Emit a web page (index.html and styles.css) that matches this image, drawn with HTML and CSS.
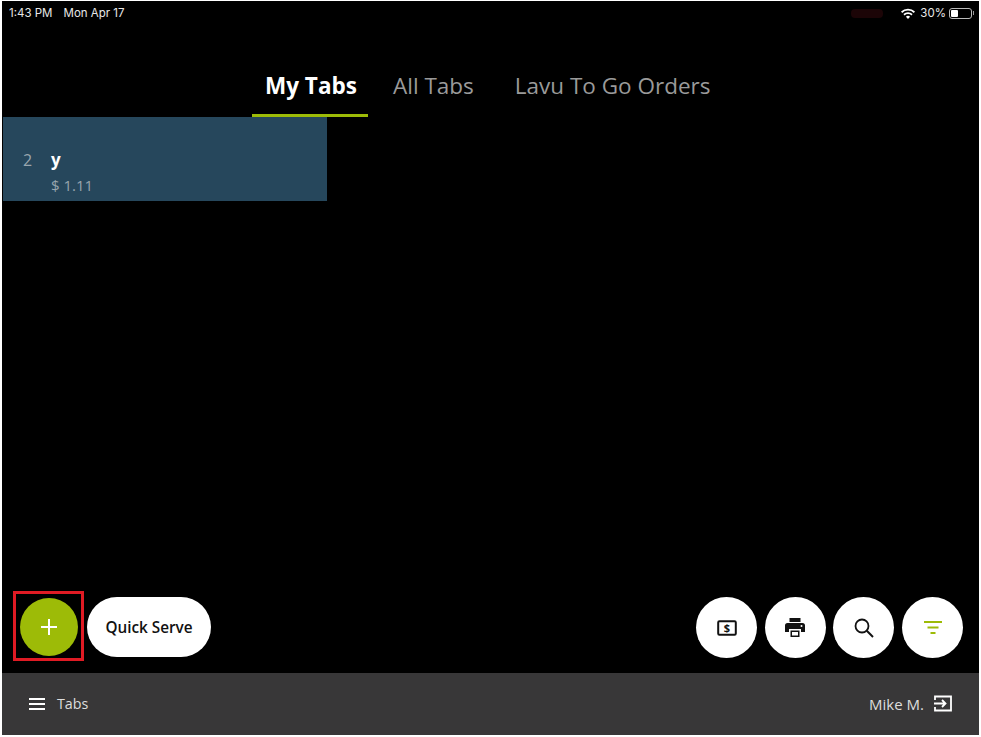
FILE: index.html
```html
<!DOCTYPE html>
<html lang="en">
<head>
<meta charset="utf-8">
<title>Tabs</title>
<link rel="stylesheet" href="styles.css">
</head>
<body>
<div class="screen">
  <header class="status">
    <div class="status-left"><span>1:43 PM</span><span>Mon Apr 17</span></div>
    <div class="status-right">
      <div class="recording"></div>
      <svg class="wifi" width="14" height="11" viewBox="0 0 14 11"><path d="M7 11 4.900 8.700a3 3 0 0 1 4.200 0L7 11ZM3.600 7.400 2.400 6.100a6.600 6.600 0 0 1 9.200 0l-1.200 1.300a4.800 4.800 0 0 0-6.800 0ZM1.200 4.900 0 3.600a10 10 0 0 1 14 0l-1.200 1.300a8.300 8.300 0 0 0-11.600 0Z" fill="#fff"/></svg>
      <span class="percent">30%</span>
      <div class="battery"><div class="battery-level"></div></div>
      <div class="battery-tip"></div>
    </div>
  </header>
  <nav class="tabs">
    <a class="tab tab-active">My Tabs</a>
    <a class="tab">All Tabs</a>
    <a class="tab">Lavu To Go Orders</a>
  </nav>
  <main class="list">
    <article class="card">
      <div class="card-num">2</div>
      <div class="card-body">
        <div class="card-title">y</div>
        <div class="card-price">$ 1.11</div>
      </div>
    </article>
  </main>
  <section class="actions">
    <div class="actions-left">
      <div class="highlight">
        <button class="add" aria-label="Add">
          <svg width="18" height="18" viewBox="0 0 18 18"><path d="M9 1v16M1 9h16" stroke="#fff" stroke-width="2" fill="none"/></svg>
        </button>
      </div>
      <button class="pill">Quick Serve</button>
    </div>
    <div class="actions-right">
      <button class="round" aria-label="Cash">
        <svg width="20" height="16" viewBox="0 0 20 16"><rect x="1.200" y="1.200" width="17.600" height="13.600" rx="1.200" fill="none" stroke="#111" stroke-width="2"/><text x="10" y="12.200" text-anchor="middle" class="dollar">$</text></svg>
      </button>
      <button class="round" aria-label="Print">
        <svg width="20" height="19" viewBox="0 0 20 19"><path d="M4.500 0h11v4h-11z" fill="#111"/><path d="M2.500 5h15A2.500 2.500 0 0 1 20 7.500V14h-4v-3H4v3H0V7.500A2.500 2.500 0 0 1 2.500 5Z" fill="#111"/><path d="M5.500 12.500h9V19h-9z" fill="#111"/><path d="M7 14h6v3.500H7z" fill="#fff"/><circle cx="16.500" cy="8" r="1" fill="#fff"/></svg>
      </button>
      <button class="round" aria-label="Search">
        <svg width="20" height="20" viewBox="0 0 20 20"><circle cx="8" cy="8" r="6.500" fill="none" stroke="#111" stroke-width="1.800"/><path d="m12.800 12.800 6.200 6.200" stroke="#111" stroke-width="2" fill="none"/></svg>
      </button>
      <button class="round" aria-label="Filter">
        <svg width="18" height="13" viewBox="0 0 18 13"><path d="M0 1h18M3.500 6.500h11M6.500 12h5" stroke="#9dbb07" stroke-width="2" fill="none"/></svg>
      </button>
    </div>
  </section>
  <footer class="footer">
    <div class="footer-left">
      <svg width="16" height="12" viewBox="0 0 16 12"><path d="M0 1h16M0 6h16M0 11h16" stroke="#fff" stroke-width="2" fill="none"/></svg>
      <span class="footer-title">Tabs</span>
    </div>
    <div class="footer-right">
      <span>Mike M.</span>
      <svg width="18" height="17" viewBox="0 0 18 17"><path d="M1 5V1.500h16v14H1V12" stroke="#fff" stroke-width="1.800" fill="none"/><path d="M0 8.500h11M8 5l3.500 3.500L8 12" stroke="#fff" stroke-width="1.800" fill="none"/></svg>
    </div>
  </footer>
</div>
</body>
</html>
```
FILE: styles.css
```css
* { box-sizing: border-box; }
html, body { margin: 0; padding: 0; background: #fff; }
body { width: 981px; height: 737px; overflow: hidden; padding: 1px 2px 1px 2px; font-family: "Open Sans", sans-serif; }
.screen { height: 734px; background: #000; display: flex; flex-direction: column; }

.status { height: 24px; padding: 0 5px 0 7px; display: flex; justify-content: space-between; align-items: center; color: #e8e8e8; font-family: Inter, "Liberation Sans", sans-serif; font-size: 11.5px; }
.status-left { display: flex; gap: 11px; }
.status-right { display: flex; align-items: center; gap: 4px; }
.recording { width: 32px; height: 9px; margin-right: 14px; border-radius: 4px; background: #1c0507; }
.percent { margin-left: 1px; }
.battery { width: 23px; height: 11px; margin-left: -1px; border: 1px solid #bbb; border-radius: 3px; padding: 1px; }
.battery-level { width: 7px; height: 100%; background: #fff; border-radius: 1px; }
.battery-tip { width: 1px; height: 4px; background: #999; margin-left: -3px; }

.tabs { height: 92px; padding-left: 250px; display: flex; align-items: flex-end; }
.tab { display: block; height: 46px; color: #9a9a9a; font-size: 22.5px; line-height: 30px; margin-right: 41px; white-space: nowrap; }
.tab-active { color: #fff; font-weight: 700; padding: 0 10px 0 13px; width: 116px; margin-right: 25px; border-bottom: 3px solid #9dbb07; }

.list { flex: 1; padding-left: 1px; }
.card { width: 324px; height: 84px; background: #26475c; display: flex; padding: 30px 0 0 20px; }
.card-num { width: 28px; color: #9aa6ae; font-size: 16px; line-height: 26px; }
.card-title { color: #fff; font-size: 17px; font-weight: 700; line-height: 26px; }
.card-price { color: #98a5ae; font-size: 15px; line-height: 26px; margin-top: -1px; }

.actions { height: 82px; padding: 0 16px 12px 11px; display: flex; justify-content: space-between; align-items: flex-end; }
.actions-left { display: flex; align-items: center; gap: 3px; }
.highlight { width: 71px; height: 70px; border: 3px solid #e01b24; display: flex; align-items: center; justify-content: center; }
.add { width: 58px; height: 58px; margin-top: 1px; border: 0; border-radius: 50%; background: #9dbb07; padding: 0; display: flex; align-items: center; justify-content: center; }
.pill { width: 124px; height: 60px; margin-top: 1px; border: 0; border-radius: 30px; background: #fff; color: #111; font-family: "Open Sans", sans-serif; font-weight: 600; font-size: 15.3px; padding: 1px 0 0; }
.actions-right { display: flex; gap: 7.6px; padding-bottom: 3px; }
.round { width: 61px; height: 61px; border: 0; border-radius: 50%; background: #fff; padding: 0; display: flex; align-items: center; justify-content: center; }
.dollar { font-family: "Open Sans", sans-serif; font-size: 11px; font-weight: 700; fill: #111; }

.footer { height: 62px; background: #383738; color: #ddd; display: flex; justify-content: space-between; align-items: center; padding: 0 27px 1px; font-size: 15px; }
.footer-left { display: flex; align-items: center; gap: 12px; }
.footer-title { font-size: 14.3px; }
.footer-right { display: flex; align-items: center; gap: 10px; }
```
